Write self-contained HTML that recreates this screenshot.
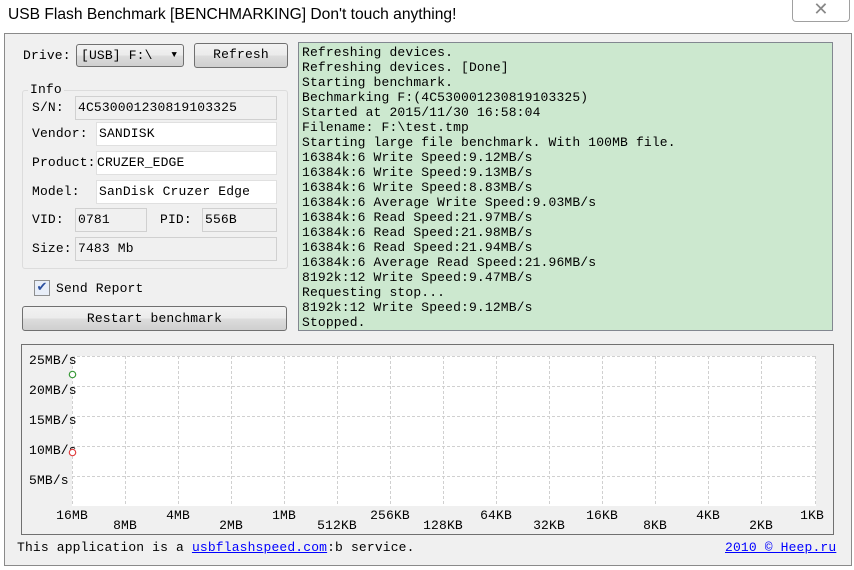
<!DOCTYPE html>
<html><head><meta charset="utf-8"><style>
*{margin:0;padding:0;box-sizing:border-box}
body{width:854px;height:570px;background:#fff;position:relative;overflow:hidden;font-family:"Liberation Mono","Noto Sans CJK SC",monospace;font-size:13px;color:#000;letter-spacing:0.15px}
.a{position:absolute;white-space:pre}
.win{position:absolute;left:4px;top:33px;width:848px;height:533px;background:#f0f0f0;border:1px solid #8a8a8a}
.btn{position:absolute;border:1px solid #707070;border-radius:3px;background:linear-gradient(#f2f2f2,#ebebeb 50%,#dddddd 51%,#cfcfcf);text-align:center}
.fld{position:absolute;border:1px solid #d0d0d0;background:#f0f0f0;padding-left:2px;line-height:22px}
.fw{background:#fff;border-color:#e0e0e0}
.log{position:absolute;left:298px;top:42px;width:535px;height:289px;background:#cce8cf;border:1px solid #828790;padding:2px 0 0 3px;line-height:15px;white-space:pre}
.chart{position:absolute;left:21px;top:344px;width:813px;height:191px;border:1px solid #707070;background:#f0f0f0}
</style></head><body>
<div class="a" style="left:8px;top:6px;font-family:'Liberation Sans',sans-serif;font-size:15.6px;letter-spacing:0">USB Flash Benchmark [BENCHMARKING] Don't touch anything!</div>
<div class="a" style="left:792px;top:0;width:58px;height:22px;border:1px solid #a0a0a0;border-top:none;border-radius:0 0 4px 4px;background:#fff;text-align:center;color:#888;font-size:18px;line-height:20px;font-family:'DejaVu Sans',sans-serif">✕</div>
<div class="win"></div>
<div class="a" style="left:23px;top:48px">Drive:</div>
<div class="btn" style="left:76px;top:44px;width:108px;height:23px;text-align:left;padding-left:4px;line-height:21px">[USB] F:\ <span style="position:absolute;right:6px;font-size:9px">▼</span></div>
<div class="btn" style="left:194px;top:43px;width:94px;height:25px;line-height:22px">Refresh</div>
<div class="a" style="left:22px;top:90px;width:266px;height:179px;border:1px solid #dcdcdc;border-radius:3px;white-space:normal"></div>
<div class="a" style="left:28px;top:82px;background:#f0f0f0;padding:0 2px">Info</div>
<div class="a" style="left:32px;top:100px">S/N:</div>
<div class="fld" style="left:75px;top:96px;width:202px;height:24px">4C530001230819103325</div>
<div class="a" style="left:32px;top:126px">Vendor:</div>
<div class="fld fw" style="left:96px;top:122px;width:181px;height:24px">SANDISK</div>
<div class="a" style="left:32px;top:155px">Product:</div>
<div class="fld fw" style="left:96px;top:151px;width:181px;height:24px;padding-left:0">CRUZER_EDGE</div>
<div class="a" style="left:32px;top:184px">Model:</div>
<div class="fld fw" style="left:96px;top:180px;width:181px;height:24px">SanDisk Cruzer Edge</div>
<div class="a" style="left:32px;top:212px">VID:</div>
<div class="fld" style="left:75px;top:208px;width:72px;height:24px">0781</div>
<div class="a" style="left:160px;top:212px">PID:</div>
<div class="fld" style="left:202px;top:208px;width:75px;height:24px">556B</div>
<div class="a" style="left:32px;top:241px">Size:</div>
<div class="fld" style="left:75px;top:237px;width:202px;height:24px">7483 Mb</div>
<div class="a" style="left:34px;top:280px;width:16px;height:16px;border:1px solid #8e8f8f;background:#e8eef8;color:#2a4fa0;font-size:13px;line-height:14px;text-align:center;font-family:'DejaVu Sans',sans-serif">✔</div>
<div class="a" style="left:56px;top:281px">Send Report</div>
<div class="btn" style="left:22px;top:306px;width:265px;height:25px;line-height:23px">Restart benchmark</div>
<div class="log">Refreshing devices.
Refreshing devices. [Done]
Starting benchmark.
Bechmarking F:(4C530001230819103325)
Started at 2015/11/30 16:58:04
Filename: F:\test.tmp
Starting large file benchmark. With 100MB file.
16384k:6 Write Speed:9.12MB/s
16384k:6 Write Speed:9.13MB/s
16384k:6 Write Speed:8.83MB/s
16384k:6 Average Write Speed:9.03MB/s
16384k:6 Read Speed:21.97MB/s
16384k:6 Read Speed:21.98MB/s
16384k:6 Read Speed:21.94MB/s
16384k:6 Average Read Speed:21.96MB/s
8192k:12 Write Speed:9.47MB/s
Requesting stop...
8192k:12 Write Speed:9.12MB/s
Stopped.</div>
<div class="chart"></div>
<svg class="a" style="left:0;top:0" width="854" height="570">
<rect x="72" y="356" width="744" height="150" fill="#fff"/>
<g stroke="#d0d0d0" stroke-dasharray="3,2" stroke-width="1">
<line x1="72" y1="356.5" x2="816" y2="356.5"/><line x1="72" y1="386.5" x2="816" y2="386.5"/><line x1="72" y1="416.5" x2="816" y2="416.5"/><line x1="72" y1="446.5" x2="816" y2="446.5"/><line x1="72" y1="476.5" x2="816" y2="476.5"/>
<line x1="72.5" y1="356" x2="72.5" y2="506"/><line x1="125.5" y1="356" x2="125.5" y2="506"/><line x1="178.5" y1="356" x2="178.5" y2="506"/><line x1="231.5" y1="356" x2="231.5" y2="506"/><line x1="284.5" y1="356" x2="284.5" y2="506"/><line x1="337.5" y1="356" x2="337.5" y2="506"/><line x1="390.5" y1="356" x2="390.5" y2="506"/><line x1="443.5" y1="356" x2="443.5" y2="506"/><line x1="496.5" y1="356" x2="496.5" y2="506"/><line x1="549.5" y1="356" x2="549.5" y2="506"/><line x1="602.5" y1="356" x2="602.5" y2="506"/><line x1="655.5" y1="356" x2="655.5" y2="506"/><line x1="708.5" y1="356" x2="708.5" y2="506"/><line x1="761.5" y1="356" x2="761.5" y2="506"/><line x1="815.5" y1="356" x2="815.5" y2="506"/>
</g>
<g font-family="Liberation Mono" font-size="13" fill="#000">
<text x="29" y="364">25MB/s</text><text x="29" y="394">20MB/s</text><text x="29" y="424">15MB/s</text><text x="29" y="454">10MB/s</text><text x="29" y="484">5MB/s</text>
<g text-anchor="middle">
<text x="72" y="519">16MB</text><text x="125" y="529">8MB</text><text x="178" y="519">4MB</text><text x="231" y="529">2MB</text><text x="284" y="519">1MB</text><text x="337" y="529">512KB</text><text x="390" y="519">256KB</text><text x="443" y="529">128KB</text><text x="496" y="519">64KB</text><text x="549" y="529">32KB</text><text x="602" y="519">16KB</text><text x="655" y="529">8KB</text><text x="708" y="519">4KB</text><text x="761" y="529">2KB</text><text x="812" y="519">1KB</text>
</g></g>
<circle cx="72.5" cy="374.5" r="3.2" fill="#fff" stroke="#3a9a3a" stroke-width="1.2"/>
<circle cx="72.5" cy="452.5" r="3.2" fill="#fff" stroke="#e04040" stroke-width="1.2"/>
</svg>
<div class="a" style="left:17px;top:540px">This application is a <span style="color:#0000ff;text-decoration:underline">usbflashspeed.com</span>:b service.</div>
<div class="a" style="left:725px;top:540px;color:#0000ff;text-decoration:underline">2010 © Heep.ru</div>
</body></html>
